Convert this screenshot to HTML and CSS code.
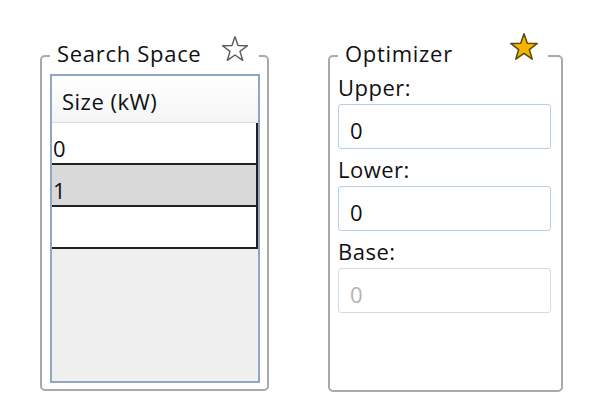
FILE: index.html
```html
<!DOCTYPE html>
<html>
<head>
<meta charset="utf-8">
<link rel="stylesheet" href="styles.css">
</head>
<body>
<div class="page">
  <fieldset class="group group-search">
    <legend class="group-title title-search">
      <span class="title-text">Search Space</span>
      <svg class="star star-empty" viewBox="0 0 30 30" width="28" height="28"><polygon points="15,1.8 18.29,11.27 28.31,11.47 20.33,17.53 23.23,27.13 15,21.4 6.77,27.13 9.67,17.53 1.69,11.47 11.71,11.27" /></svg>
    </legend>
    <div class="listbox">
      <div class="list-header">Size (kW)</div>
      <div class="list-row">0</div>
      <div class="list-row selected">1</div>
      <div class="list-row"></div>
    </div>
  </fieldset>
  <fieldset class="group group-opt">
    <legend class="group-title title-opt">
      <span class="title-text">Optimizer</span>
      <svg class="star star-filled" viewBox="0 0 30 30" width="32" height="30"><polygon points="15,1.8 18.29,11.27 28.31,11.47 20.33,17.53 23.23,27.13 15,21.4 6.77,27.13 9.67,17.53 1.69,11.47 11.71,11.27" /></svg>
    </legend>
    <label class="field-label">Upper:</label>
    <div class="textbox">0</div>
    <label class="field-label">Lower:</label>
    <div class="textbox">0</div>
    <label class="field-label">Base:</label>
    <div class="textbox disabled">0</div>
  </fieldset>
</div>
</body>
</html>
```
FILE: styles.css
```css
html, body {
  margin: 0;
  padding: 0;
  background: #ffffff;
}

body {
  font-family: "Open Sans", "Noto Sans", sans-serif;
  font-size: 22px;
  color: #111111;
}

.page {
  display: flex;
  align-items: flex-start;
  gap: 59px;
  padding: 38px 0 0 40px;
}

.group {
  margin: 0;
  border: 2px solid #a9a9a9;
  border-radius: 5px;
  padding: 0 7px 6px 8px;
  min-width: 0;
}

.group-search {
  width: 229px;
  box-sizing: border-box;
}

.group-opt {
  width: 235px;
  box-sizing: border-box;
  padding: 0 10px 70px 8px;
}

.group-title {
  display: flex;
  align-items: flex-start;
  height: 36px;
  box-sizing: border-box;
  line-height: 30px;
  padding-bottom: 6px;
  letter-spacing: 0.7px;
}

.title-search {
  padding-left: 7px;
  padding-right: 10px;
}

.title-opt {
  width: 210px;
  padding-left: 7px;
  padding-right: 8px;
}

.title-search .star {
  margin-left: 20px;
  margin-top: -3px;
}

.title-opt .star {
  margin-left: auto;
  margin-top: -6px;
}

.star polygon {
  stroke-width: 1.5;
  stroke-linejoin: round;
}

.star-empty polygon {
  fill: #ffffff;
  stroke: #5a5a5a;
}

.star-filled polygon {
  fill: #f6b400;
  stroke: #5c4800;
}

.listbox {
  height: 309px;
  box-sizing: border-box;
  border: 2px solid #8fa7c5;
  background: #efefef;
  display: flex;
  flex-direction: column;
}

.list-header {
  height: 47px;
  box-sizing: border-box;
  padding: 10px 0 0 10px;
  line-height: 30px;
  letter-spacing: 0.5px;
  background: linear-gradient(#ffffff, #f4f5f7);
  border-bottom: 1px solid #dadcdf;
}

.list-row {
  height: 42px;
  box-sizing: border-box;
  padding: 10px 0 0 1px;
  line-height: 30px;
  background: #ffffff;
  border-right: 2px solid #222222;
  border-bottom: 2px solid #222222;
}

.list-row.selected {
  background: #d9d9d9;
}

.field-label {
  display: block;
  line-height: 26px;
  margin-bottom: 4px;
  letter-spacing: 0.5px;
}

.textbox {
  height: 45px;
  box-sizing: border-box;
  border: 1px solid #b7cfe9;
  border-radius: 3px;
  padding: 10px 0 0 11px;
  line-height: 30px;
  margin-bottom: 7px;
  background: #ffffff;
}

.textbox.disabled {
  border-color: #dadada;
  color: #b3b3b3;
}
```
